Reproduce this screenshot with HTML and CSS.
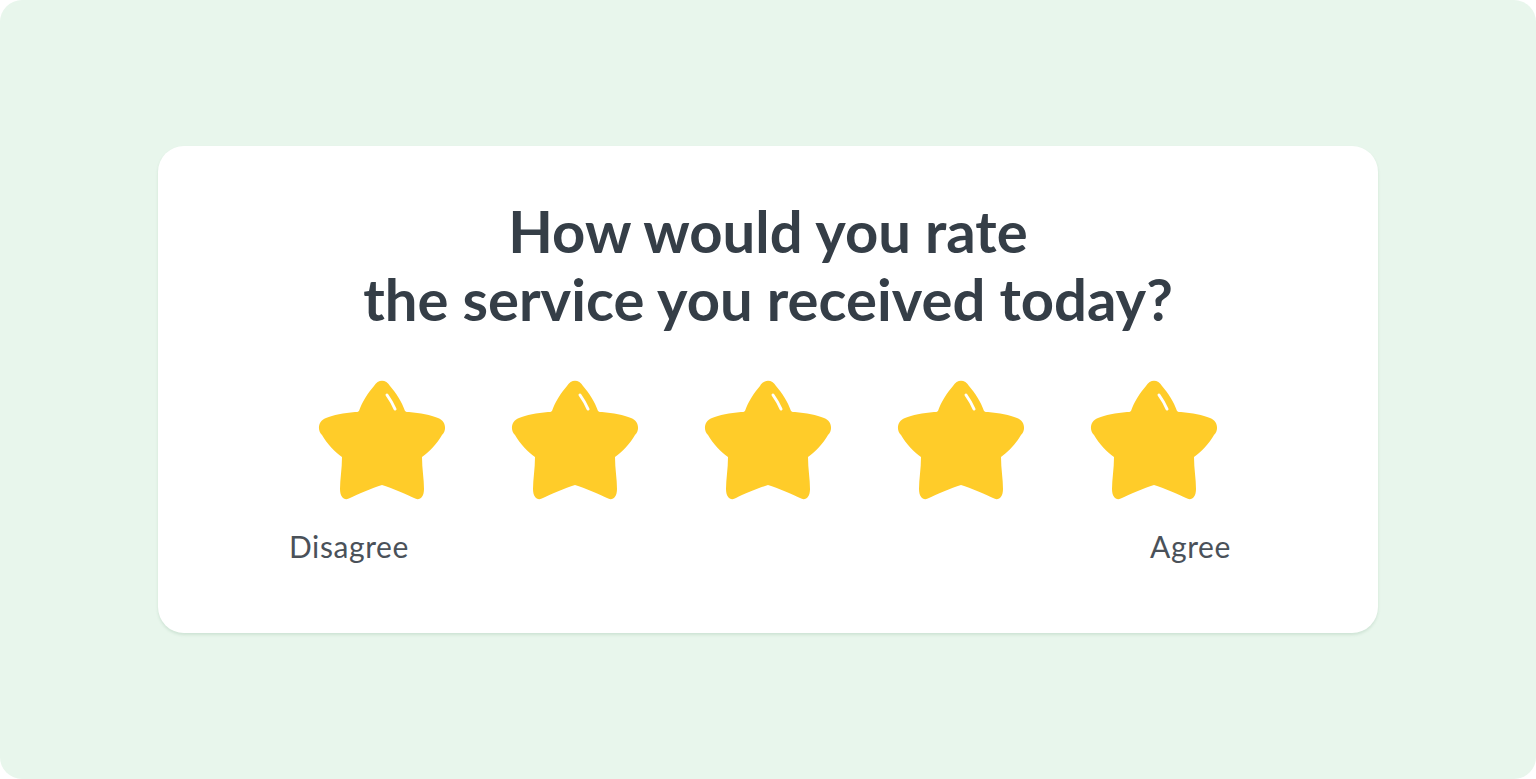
FILE: index.html
```html
<!DOCTYPE html>
<html lang="en">
  <head>
    <meta charset="UTF-8" />
    <meta name="viewport" content="width=device-width, initial-scale=1.0" />
    <link rel="stylesheet" href="styles.css">
  </head>
  <body>
    <div class="frame">
      <div class="card">
        <h1 class="question">How would you rate<br />the service you received today?</h1>

        <div class="stars">
          <svg class="star" viewBox="0 0 128 122"><use href="#star-shape" /></svg>
          <svg class="star" viewBox="0 0 128 122"><use href="#star-shape" /></svg>
          <svg class="star" viewBox="0 0 128 122"><use href="#star-shape" /></svg>
          <svg class="star" viewBox="0 0 128 122"><use href="#star-shape" /></svg>
          <svg class="star" viewBox="0 0 128 122"><use href="#star-shape" /></svg>
        </div>

        <div class="labels">
          <span>Disagree</span>
          <span>Agree</span>
        </div>
      </div>
    </div>

    <!-- shared star drawing -->
    <svg width="0" height="0" class="defs">
      <defs>
        <g id="star-shape">
          <path fill="#ffcc29" d="M56 7 C60 0 68 0 72 7 C78 14 84 23 87 32 C88 33 89 33 91 33 C102 34 113 36 120 39 C128 42 129 51 124 56 C119 65 111 73 104 78 C104 90 106 100 106 110 C106 119 101 122 96 119 C88 115 74 109 64 106 C54 109 40 115 32 119 C27 122 22 119 22 110 C22 100 24 90 24 78 C17 73 9 65 4 56 C-1 51 0 42 8 39 C15 36 26 34 37 33 C39 33 40 33 41 32 C44 23 50 14 56 7 Z" />
          <path d="M69 16 Q74 23 77 30" stroke="#fff" stroke-width="3" stroke-linecap="round" fill="none" />
        </g>
      </defs>
    </svg>
  </body>
</html>
```

FILE: styles.css
```css
* {
  box-sizing: border-box;
}

body {
  margin: 0;
  background-color: #fff;
  font-family: Lato, "Open Sans", sans-serif;
}

.frame {
  width: 1536px;
  height: 779px;
  background-color: #e8f6ec;
  border-radius: 22px;
  display: flex;
  justify-content: center;
  align-items: center;
}

.card {
  width: 1220px;
  background-color: #fff;
  border-radius: 26px;
  box-shadow: 0 2px 3px rgba(60, 120, 80, 0.14);
  padding: 51px 0 69px;
}

.question {
  margin: 0;
  font-size: 58px;
  line-height: 68px;
  font-weight: 700;
  text-align: center;
  color: #353e47;
}

.stars {
  display: flex;
  justify-content: center;
  gap: 65px;
  margin-top: 46px;
}

.star {
  width: 128px;
  height: 122px;
  display: block;
}

.labels {
  display: flex;
  justify-content: space-between;
  margin-top: 27px;
  padding: 0 147px 0 131px;
  font-size: 30px;
  line-height: 36px;
  letter-spacing: 0.6px;
  color: #4a5159;
}

.defs {
  position: absolute;
}
```
